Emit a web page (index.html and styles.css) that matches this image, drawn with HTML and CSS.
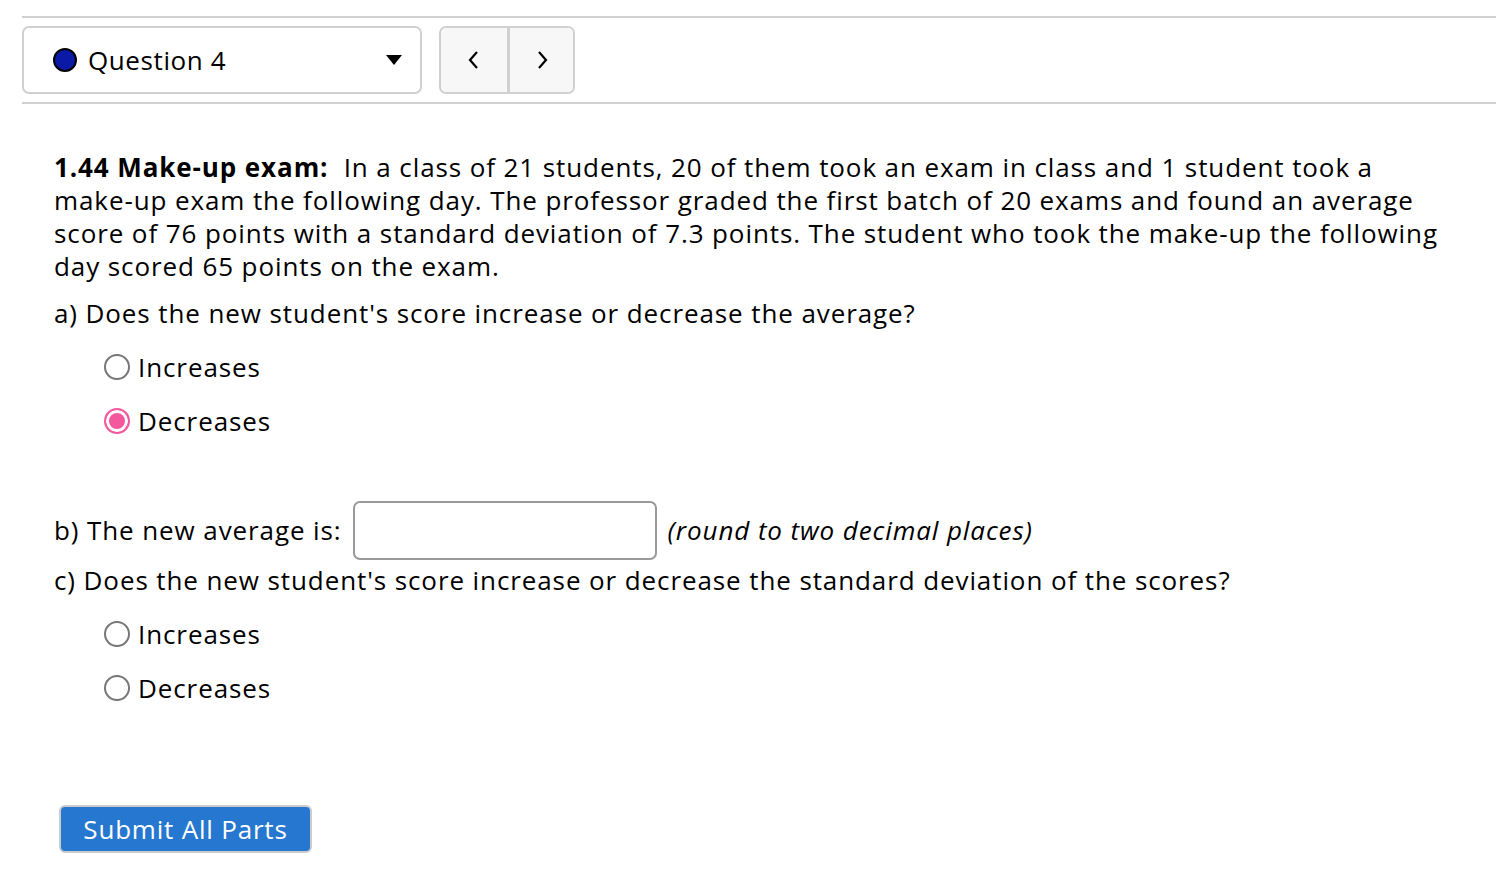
FILE: index.html
```html
<!DOCTYPE html>
<html lang="en">
<head>
  <meta charset="UTF-8" />
  <title>Question 4</title>
  <link rel="stylesheet" href="styles.css">
</head>
<body>
  <div class="topbar">
    <div class="qselect">
      <span class="dot"></span>
      <span class="qname">Question 4</span>
      <span class="caret"></span>
    </div>
    <div class="qnav">
      <button class="nav-btn">
        <svg width="16" height="22" viewBox="0 0 16 22"><path d="M11 3 L4 11 L11 19" fill="none" stroke="#000" stroke-width="2.2"/></svg>
      </button>
      <button class="nav-btn">
        <svg width="16" height="22" viewBox="0 0 16 22"><path d="M5 3 L12 11 L5 19" fill="none" stroke="#000" stroke-width="2.2"/></svg>
      </button>
    </div>
  </div>

  <div class="question">
    <p class="intro"><b>1.44 Make-up exam:</b>&nbsp; In a class of 21 students, 20 of them took an exam in class and 1 student took a <span class="nowrap">make-up</span> exam the following day. The professor graded the first batch of 20 exams and found an average score of 76 points with a standard deviation of 7.3 points. The student who took the make-up the following day scored 65 points on the exam.</p>

    <p class="part">a) Does the new student's score increase or decrease the average?</p>
    <ul class="choices">
      <li><span class="radio"></span>Increases</li>
      <li><span class="radio checked"></span>Decreases</li>
    </ul>

    <p class="part part-b">b) The new average is: <span class="answer"></span> <i>(round to two decimal places)</i></p>

    <p class="part part-c">c) Does the new student's score increase or decrease the standard deviation of the scores?</p>
    <ul class="choices">
      <li><span class="radio"></span>Increases</li>
      <li><span class="radio"></span>Decreases</li>
    </ul>

    <button class="submit">Submit All Parts</button>
  </div>
</body>
</html>
```

FILE: styles.css
```css
body {
  margin: 0;
  font-family: 'Open Sans', 'Noto Sans', sans-serif;
  font-size: 26px;
  letter-spacing: 0.9px;
  color: #000;
  background: #fff;
}

.topbar {
  margin: 16px 0 0 22px;
  padding: 8px 0 8px 0;
  border-top: 2px solid #d0d0d0;
  border-bottom: 2px solid #d0d0d0;
  display: flex;
  gap: 17px;
}

.qselect {
  width: 400px;
  height: 68px;
  box-sizing: border-box;
  border: 2px solid #d0d0d0;
  border-radius: 7px;
  display: flex;
  align-items: center;
  padding-left: 29px;
}

.dot {
  width: 20px;
  height: 20px;
  border-radius: 50%;
  background: #0a1aa6;
  border: 2px solid #000;
  margin-right: 11px;
}

.qname {
  flex: 1;
  letter-spacing: 0.6px;
}

.caret {
  width: 0;
  height: 0;
  border-left: 8px solid transparent;
  border-right: 8px solid transparent;
  border-top: 10px solid #000;
  margin-right: 18px;
}

.qnav {
  display: flex;
  height: 68px;
  box-sizing: border-box;
  border: 2px solid #d0d0d0;
  border-radius: 7px;
  background: #f7f7f7;
  overflow: hidden;
}

.nav-btn {
  width: 66px;
  border: none;
  background: #f7f7f7;
  display: flex;
  align-items: center;
  justify-content: center;
  padding: 0;
}

.nav-btn + .nav-btn {
  border-left: 3px solid #d0d0d0;
}

.question {
  padding: 47px 46px 0 54px;
}

p {
  margin: 0;
  line-height: 33px;
}

.nowrap {
  white-space: nowrap;
}

.part {
  margin-top: 14px;
}

.choices {
  list-style: none;
  margin: 10px 0 0 0;
  padding: 0 0 0 50px;
}

.choices li {
  display: flex;
  align-items: center;
  height: 54px;
}

.radio {
  width: 22px;
  height: 22px;
  border: 2px solid #777;
  border-radius: 50%;
  margin-right: 8px;
  box-sizing: content-box;
}

.radio.checked {
  border-color: #f4579e;
  background: #f4579e;
  box-shadow: inset 0 0 0 3px #fff;
}

.part-b {
  margin-top: 53px;
  display: flex;
  align-items: center;
  gap: 11px;
}

.part-c {
  margin-top: 4px;
}

.answer {
  width: 304px;
  height: 59px;
  box-sizing: border-box;
  border: 2px solid #999;
  border-radius: 7px;
}

.submit {
  margin: 90px 0 0 5px;
  width: 253px;
  height: 48px;
  background: #2677cf;
  color: #fff;
  border: 2px solid #ccc;
  border-radius: 6px;
  font-family: inherit;
  font-size: 26px;
  letter-spacing: 0.8px;
  padding: 0;
}
```
